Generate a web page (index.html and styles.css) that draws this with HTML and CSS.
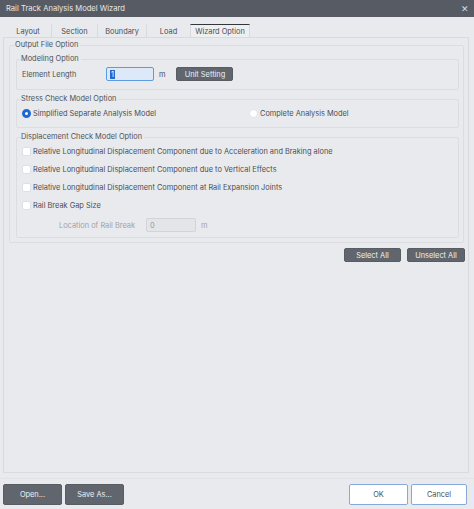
FILE: index.html
```html
<!DOCTYPE html>
<html lang="en">
<head>
    <meta charset="UTF-8">
    <title>Rail Track Analysis Model Wizard</title>
    <link rel="stylesheet" href="styles.css">
</head>
<body>
    <div class="dialog">
        <div class="titlebar">
            <span>Rail Track Analysis Model Wizard</span>
            <span class="close">&#10005;</span>
        </div>

        <div class="tabs">
            <div class="tab t-layout">Layout</div>
            <div class="tab t-section">Section</div>
            <div class="tab t-boundary">Boundary</div>
            <div class="tab t-load">Load</div>
            <div class="tab t-wizard active">Wizard Option</div>
        </div>

        <div class="panel">
            <fieldset class="group outer">
                <legend>Output File Option</legend>

                <fieldset class="group modeling">
                    <legend>Modeling Option</legend>
                    <div class="row">
                        <span class="label-len">Element Length</span>
                        <div class="field focus"><span class="sel">1</span></div>
                        <span class="unit">m</span>
                        <button class="btn dark unit-btn">Unit Setting</button>
                    </div>
                </fieldset>

                <fieldset class="group stress">
                    <legend>Stress Check Model Option</legend>
                    <div class="row radios">
                        <label class="opt"><span class="radio on"></span>Simplified Separate Analysis Model</label>
                        <label class="opt"><span class="radio"></span>Complete Analysis Model</label>
                    </div>
                </fieldset>

                <fieldset class="group displacement">
                    <legend>Displacement Check Model Option</legend>
                    <label class="row opt"><span class="check"></span>Relative Longitudinal Displacement Component due to Acceleration and Braking alone</label>
                    <label class="row opt"><span class="check"></span>Relative Longitudinal Displacement Component due to Vertical Effects</label>
                    <label class="row opt"><span class="check"></span>Relative Longitudinal Displacement Component at Rail Expansion Joints</label>
                    <label class="row opt"><span class="check"></span>Rail Break Gap Size</label>
                    <div class="row disabled loc-row">
                        <span class="label-loc">Location of Rail Break</span>
                        <div class="field off">0</div>
                        <span class="unit">m</span>
                    </div>
                </fieldset>
            </fieldset>

            <div class="select-row">
                <button class="btn dark sel-btn">Select All</button>
                <button class="btn dark sel-btn">Unselect All</button>
            </div>
        </div>

        <div class="footer">
            <button class="btn dark foot-btn">Open...</button>
            <button class="btn dark foot-btn">Save As...</button>
            <span class="spacer"></span>
            <button class="btn light foot-btn">OK</button>
            <button class="btn light foot-btn cancel">Cancel</button>
        </div>
    </div>
</body>
</html>
```

FILE: styles.css
```css
body {
    margin: 0;
    background-color: #e9eaed;
    font-family: Inter, "Noto Sans", sans-serif;
    font-size: 7.4px;
    color: #4b4e53;
}

.dialog {
    width: 474px;
    height: 509px;
    display: flex;
    flex-direction: column;
}

.titlebar {
    height: 17px;
    background-color: #575c64;
    color: #e6e7ea;
    display: flex;
    align-items: center;
    justify-content: space-between;
    padding: 0 5px 0 6px;
    font-size: 7.6px;
}
.close {
    font-size: 9px;
    color: #d9dbde;
}

.tabs {
    display: flex;
    margin-top: 7px;
    padding-left: 5px;
    height: 13px;
}
.tab {
    display: flex;
    align-items: center;
    justify-content: center;
    padding-top: 1px;
    box-sizing: border-box;
    border-right: 1px solid #d9dadd;
    border-top: 1px solid transparent;
}
.t-layout { width: 47px; }
.t-section { width: 46px; }
.t-boundary { width: 49px; }
.t-load { width: 43px; border-right: none; }
.t-wizard { width: 60px; }
.tab.active {
    border-top: 1px solid #33363b;
    border-left: 1px solid #d9dadd;
    border-right: 1px solid #d9dadd;
    background-color: #eeeff1;
}

.panel {
    margin: 0 5px 0 3px;
    height: 434px;
    border: 1px solid #d9dadd;
    padding: 0 3px 0 5px;
}

.group {
    margin: 0 0 4px 0;
    padding: 1px 5px 4px 5px;
    border: 1px solid #dcdde0;
    border-radius: 2px;
    min-width: 0;
}
.group legend {
    padding: 0 2px 0 0;
    margin-left: -1px;
    line-height: 10px;
    color: #4f5257;
}
.group.outer {
    margin: 2px 1px 0 0;
    padding: 4px 4px 4px 6px;
}
.group.modeling {
    padding-bottom: 6px;
}
.group.stress {
    padding-top: 0;
    padding-bottom: 5px;
}
.group.displacement {
    padding-top: 0;
    padding-bottom: 3px;
    margin-bottom: 0;
}

.row {
    height: 18px;
    display: flex;
    align-items: center;
}

.label-len {
    width: 84px;
}
.field {
    width: 45px;
    height: 12px;
    border: 1px solid #d2d4d8;
    border-radius: 2px;
    background-color: #e4e5e8;
    display: flex;
    align-items: center;
    padding-left: 3px;
    box-sizing: content-box;
}
.field.focus {
    border-color: #5d9be0;
    background-color: #dde9f9;
    width: 43px;
}
.sel {
    background-color: #2a67c9;
    color: #fff;
    line-height: 9px;
    padding: 0 1px;
}
.unit {
    margin-left: 5px;
}
.unit-btn {
    margin-left: 11px;
    width: 57px;
    height: 14px;
}

.btn {
    font-family: inherit;
    font-size: 7.4px;
    border-radius: 2px;
    padding: 0;
    cursor: pointer;
}
.btn.dark {
    background-color: #61666e;
    color: #eef0f2;
    border: 1px solid #585d64;
}
.btn.light {
    background-color: #ffffff;
    color: #4b4e53;
    border: 1px solid #86a9da;
}

.radios {
    display: grid;
    grid-template-columns: 227px 1fr;
}
.opt {
    display: flex;
    align-items: center;
}
.radio {
    width: 7px;
    height: 7px;
    border-radius: 50%;
    background-color: #fff;
    border: 1px solid #e2e3e6;
    margin-right: 2px;
    box-sizing: content-box;
}
.radio.on {
    width: 3px;
    height: 3px;
    border: 3px solid #1d6ad6;
}
.check {
    width: 7px;
    height: 7px;
    border-radius: 2px;
    background-color: #fff;
    border: 1px solid #dfe0e3;
    margin-right: 2px;
}

.disabled {
    color: #a0a2a7;
}
.loc-row {
    margin-top: 2px;
}
.label-loc {
    margin-left: 37px;
    width: 87px;
}
.field.off {
    color: #96989d;
}

.select-row {
    display: flex;
    justify-content: flex-end;
    gap: 6px;
    margin-top: 5px;
}
.sel-btn {
    width: 57px;
    height: 14px;
}
.sel-btn + .sel-btn {
    width: 58px;
}

.footer {
    margin-top: 5px;
    border-top: 1px solid #e1e2e5;
    padding: 5px 7px 0 3px;
    display: flex;
    gap: 3px;
}
.spacer {
    flex: 1;
}
.foot-btn {
    width: 59px;
    height: 21px;
}
.foot-btn.cancel {
    width: 56px;
}
```
